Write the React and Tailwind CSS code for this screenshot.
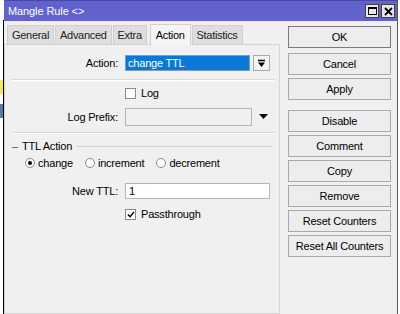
import React from 'react';

const font = { fontFamily: '"Liberation Sans", Arial, sans-serif' };

function Btn({ label, strong }) {
  return (
    <div
      className={`h-[22px] w-[103px] flex items-center justify-center bg-[#ededed] border text-[11px] tracking-[-0.2px] text-black ${
        strong ? 'border-[#7a7a7a]' : 'border-[#a9a9a9]'
      }`}
    >
      {label}
    </div>
  );
}

function Row({ label, children, className = '' }) {
  return (
    <div className={`flex items-center ${className}`}>
      <div className="w-[114px] text-right text-[11px] leading-none pr-[1px]">{label}</div>
      <div className="ml-[6px] flex items-center">{children}</div>
    </div>
  );
}

function Sep({ className = '' }) {
  return (
    <div className={`mx-[7px] w-[263px] border-t border-[#d8d8d8] border-b border-b-white ${className}`} />
  );
}

function Radio({ checked, label }) {
  return (
    <div className="flex items-center gap-[3px]">
      <div className="w-[10px] h-[10px] rounded-full border border-[#8a8a8a] bg-white flex items-center justify-center">
        {checked && <div className="w-[4px] h-[4px] rounded-full bg-black" />}
      </div>
      <span className="text-[11px] leading-none">{label}</span>
    </div>
  );
}

export default function App() {
  const tabs = ['General', 'Advanced', 'Extra', 'Action', 'Statistics'];
  return (
    <div className="w-[400px] h-[314px] flex bg-white overflow-hidden text-black tracking-[-0.2px]" style={font}>
      {/* stuff behind window */}
      <div className="w-[3px] flex flex-col">
        <div className="h-[80px] bg-white" />
        <div className="h-[14px] bg-[#f3e85a]" />
        <div className="h-[10px] bg-white" />
        <div className="h-[14px] bg-[#5a7aa8]" />
        <div className="flex-1 bg-white" />
      </div>
      <div className="w-[1px] bg-black mt-[20px]" />
      <div className="w-[394px] flex flex-col bg-[#f0f0f0] border-r border-[#5a5a5a]">
        {/* title bar */}
        <div className="h-[21px] bg-[#6262cf] flex items-center pl-[4px] pr-[2px] border-t border-[#4848a8]">
          <span className="text-white text-[11px] tracking-[-0.1px]">Mangle Rule &lt;&gt;</span>
          <div className="ml-auto flex gap-[2px]">
            <div className="w-[14px] h-[14px] bg-[#e8e8e8] border border-[#404040] flex items-center justify-center">
              <div className="w-[9px] h-[8px] border border-black border-t-2" />
            </div>
            <div className="w-[14px] h-[14px] bg-[#e8e8e8] border border-[#404040] flex items-center justify-center">
              <svg width="9" height="9" viewBox="0 0 9 9">
                <path d="M1 1L8 8M8 1L1 8" stroke="black" strokeWidth="1.8" />
              </svg>
            </div>
          </div>
        </div>

        <div className="flex flex-1">
          {/* left: tabs + panel */}
          <div className="w-[276px] flex flex-col">
            <div className="flex items-end h-[23px] pl-[3px] gap-[1px]">
              {tabs.map((t) =>
                t === 'Action' ? (
                  <div
                    key={t}
                    className="h-[21px] px-[5px] ml-[2px] flex items-center bg-[#f5f5f5] border border-b-0 border-[#d0d0d0] text-[11px] tracking-[-0.3px] relative top-[1px]"
                  >
                    {t}
                  </div>
                ) : (
                  <div
                    key={t}
                    className="h-[19px] px-[4px] flex items-center bg-[#dedede] border border-b-0 border-[#d0d0d0] text-[11px] tracking-[-0.3px] text-[#222]"
                  >
                    {t}
                  </div>
                )
              )}
            </div>
            <div className="flex-1 border border-[#d4d4d4] bg-[#f0f0f0] flex flex-col">
              <Row label="Action:" className="mt-[10px] h-[16px]">
                <div className="w-[125px] h-[16px] bg-[#0a78d7] border border-[#7a9cc6] text-white text-[11px] flex items-center pl-[2px]">
                  change TTL
                </div>
                <div className="ml-[3px] w-[17px] h-[16px] border border-[#a9a9a9] bg-[#f4f4f4] flex items-center justify-center">
                  <svg width="9" height="9" viewBox="0 0 9 9">
                    <path d="M1 1.5H8" stroke="black" strokeWidth="1.5" />
                    <path d="M1 3.5H8L4.5 8Z" fill="black" />
                  </svg>
                </div>
              </Row>
              <Sep className="mt-[8px]" />
              <Row label="" className="mt-[6px] h-[12px]">
                <div className="w-[11px] h-[11px] border border-[#8a8a8a] bg-white" />
                <span className="ml-[5px] text-[11px] leading-none">Log</span>
              </Row>
              <Row label="Log Prefix:" className="mt-[9px] h-[18px]">
                <div className="w-[127px] h-[18px] bg-[#f0f0f0] border border-[#b5b5b5]" />
                <svg className="ml-[7px]" width="9" height="6" viewBox="0 0 9 6">
                  <path d="M0 0H9L4.5 5Z" fill="black" />
                </svg>
              </Row>
              <Sep className="mt-[6px]" />
              <div className="flex items-center h-[12px] mt-[6px] pl-[7px] pr-[7px] text-[11px] leading-none">
                <span className="text-[#555]">–</span>
                <span className="ml-[4px]">TTL Action</span>
                <div className="flex-1 ml-[5px] border-t border-[#d0d0d0]" />
              </div>
              <div className="flex items-center h-[12px] mt-[5px] pl-[20px] gap-[12px]">
                <Radio checked label="change" />
                <Radio label="increment" />
                <Radio label="decrement" />
              </div>
              <Row label="New TTL:" className="mt-[14px] h-[16px]">
                <div className="w-[145px] h-[16px] bg-white border border-[#b5b5b5] text-[11px] flex items-center pl-[3px]">
                  1
                </div>
              </Row>
              <Row label="" className="mt-[9px] h-[12px]">
                <div className="w-[11px] h-[11px] border border-[#8a8a8a] bg-white flex items-center justify-center">
                  <svg width="8" height="7" viewBox="0 0 9 8">
                    <path d="M1 4L3.5 6.5L8 1" stroke="black" strokeWidth="1.7" fill="none" />
                  </svg>
                </div>
                <span className="ml-[5px] text-[11px] leading-none">Passthrough</span>
              </Row>
            </div>
          </div>

          {/* right: buttons */}
          <div className="ml-[8px] pt-[5px] flex flex-col">
            <Btn label="OK" strong />
            <div className="mt-[5px] flex flex-col gap-[3px]">
              <Btn label="Cancel" />
              <Btn label="Apply" />
            </div>
            <div className="mt-[10px] flex flex-col gap-[3px]">
              <Btn label="Disable" />
              <Btn label="Comment" />
              <Btn label="Copy" />
              <Btn label="Remove" />
              <Btn label="Reset Counters" />
              <Btn label="Reset All Counters" />
            </div>
          </div>
        </div>
      </div>
    </div>
  );
}
